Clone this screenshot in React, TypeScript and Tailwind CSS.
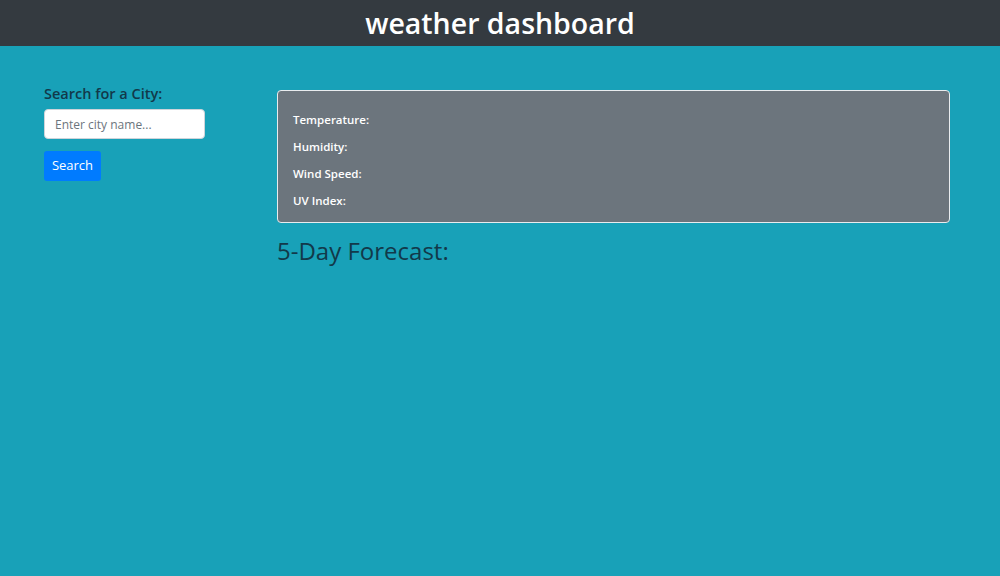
export default function App() {
  return (
    <div
      className="min-h-screen w-full bg-[#18a1b8] text-[#212529]"
      style={{ fontFamily: '"Open Sans", "Noto Sans", sans-serif' }}
    >
      {/* header */}
      <header className="flex h-[46px] items-center justify-center bg-[#343a40]">
        <h1 className="text-[28.5px] font-semibold leading-none text-white">weather dashboard</h1>
      </header>

      <main className="flex pl-[44px] pr-[50px] pt-[37px]">
        {/* search column */}
        <div className="flex w-[233px] shrink-0 flex-col pt-[1px]">
          <label className="text-[14.5px] font-semibold leading-[20px] text-[#12394a]">Search for a City:</label>
          <input
            type="text"
            placeholder="Enter city name..."
            className="mt-[5px] h-[30px] w-[161px] rounded-[4px] border border-[#ced4da] bg-white px-[10px] text-[12px] text-[#495057] placeholder:text-[#6c757d] outline-none"
          />
          <button className="mt-[12px] h-[30px] w-[57px] rounded-[3px] bg-[#007bff] text-[13px] text-white">
            Search
          </button>
        </div>

        {/* current weather */}
        <div className="flex flex-1 flex-col pt-[7px]">
          <div className="flex h-[133px] flex-col gap-[9px] rounded-[4px] border border-[#e9ecef] bg-[#6c757d] px-[15px] pt-[20px] text-[11.5px] font-semibold leading-[18px] text-white">
            <p>Temperature:</p>
            <p>Humidity:</p>
            <p>Wind Speed:</p>
            <p>UV Index:</p>
          </div>
          <h2 className="mt-[12px] text-[24px] leading-[32px] text-[#12394a]">5-Day Forecast:</h2>
        </div>
      </main>
    </div>
  );
}
